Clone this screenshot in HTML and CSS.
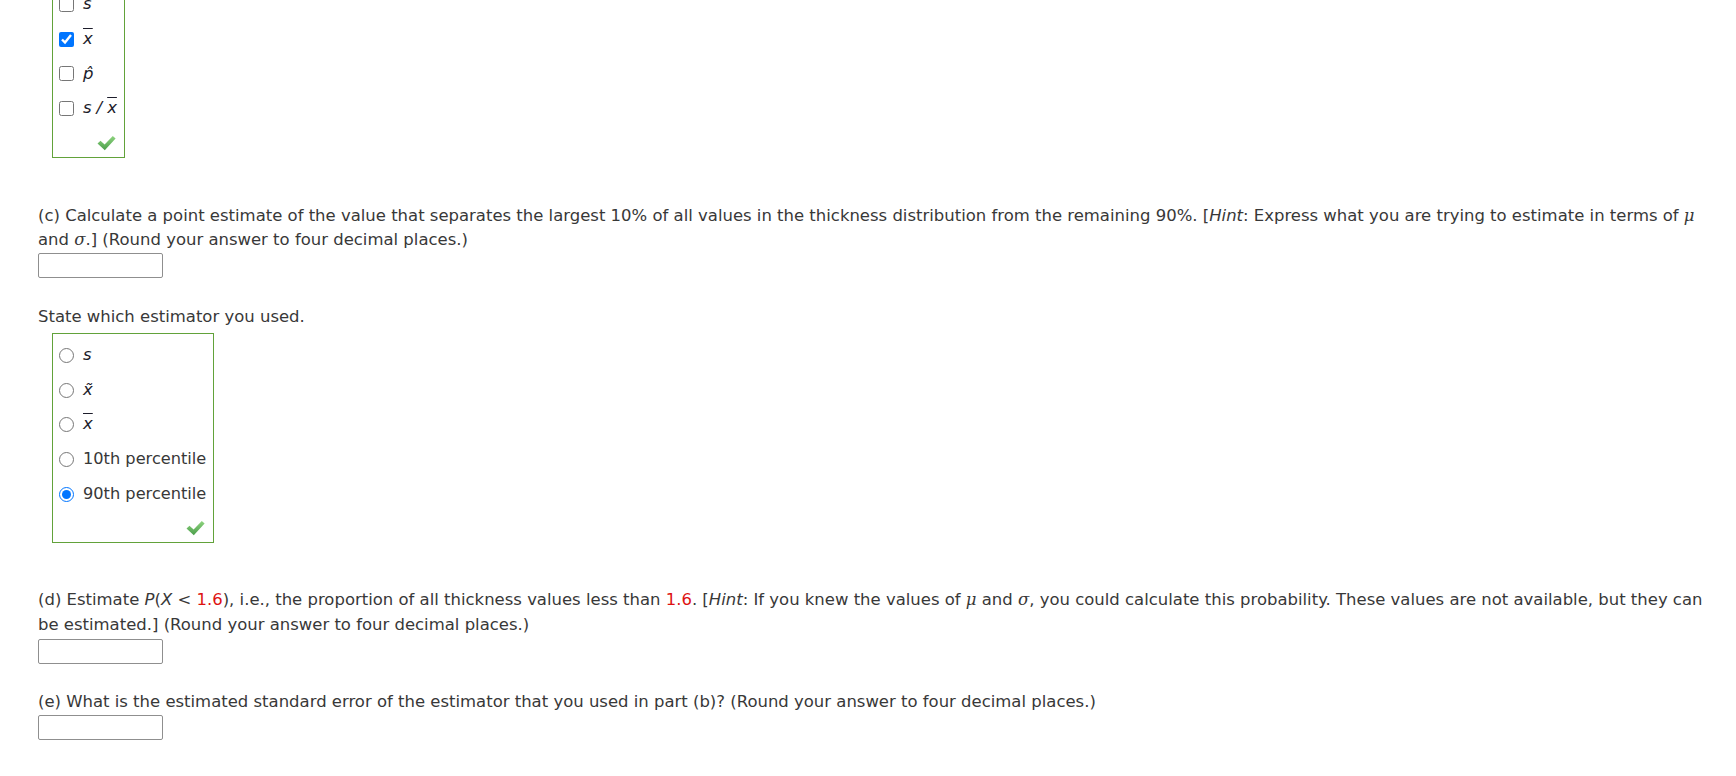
FILE: index.html
```html
<!DOCTYPE html>
<html lang="en">
<head>
<meta charset="utf-8">
<title>Point estimates</title>
<link rel="stylesheet" href="styles.css">
</head>
<body>
<div class="page">
  <div class="choice-box box-top">
    <label class="choice"><input type="checkbox"><span class="math">s</span></label>
    <label class="choice"><input type="checkbox" checked><span class="math"><span class="bar">x</span></span></label>
    <label class="choice"><input type="checkbox"><span class="math">p&#770;</span></label>
    <label class="choice"><input type="checkbox"><span class="math">s<span class="slash">/</span><span class="bar">x</span></span></label>
    <div class="mark">
      <svg width="19" height="16" viewBox="0 0 19 16"><defs><linearGradient id="g1" x1="0" y1="0" x2="0" y2="1"><stop offset="0" stop-color="#8fd47f"/><stop offset="1" stop-color="#4b9e4b"/></linearGradient></defs><path d="M0.5 8.5 L3.5 5.8 L7.6 9.6 L15.8 1 L18.6 3.6 L7.8 15.2 Z" fill="url(#g1)"/></svg>
    </div>
  </div>

  <section class="part part-c">
    <p class="prompt">(c) Calculate a point estimate of the value that separates the largest 10% of all values in the thickness distribution from the remaining 90%. [<i>Hint</i>: Express what you are trying to estimate in terms of <i class="greek">&mu;</i> and <i class="greek">&sigma;</i>.] (Round your answer to four decimal places.)</p>
    <input class="num-input" type="text">
    <p class="prompt sub">State which estimator you used.</p>
    <div class="choice-box">
      <label class="choice"><input type="radio" name="est"><span class="math">s</span></label>
      <label class="choice"><input type="radio" name="est"><span class="math">x&#771;</span></label>
      <label class="choice"><input type="radio" name="est"><span class="math"><span class="bar">x</span></span></label>
      <label class="choice"><input type="radio" name="est"><span>10th percentile</span></label>
      <label class="choice"><input type="radio" name="est" checked><span>90th percentile</span></label>
      <div class="mark">
        <svg width="19" height="16" viewBox="0 0 19 16"><defs><linearGradient id="g2" x1="0" y1="0" x2="0" y2="1"><stop offset="0" stop-color="#8fd47f"/><stop offset="1" stop-color="#4b9e4b"/></linearGradient></defs><path d="M0.5 8.5 L3.5 5.8 L7.6 9.6 L15.8 1 L18.6 3.6 L7.8 15.2 Z" fill="url(#g2)"/></svg>
      </div>
    </div>
  </section>

  <section class="part part-d">
    <p class="prompt">(d) Estimate <i>P</i>(<i>X</i> &lt; <span class="red">1.6</span>), i.e., the proportion of all thickness values less than <span class="red">1.6</span>. [<i>Hint</i>: If you knew the values of <i class="greek">&mu;</i> and <i class="greek">&sigma;</i>, you could calculate this probability. These values are not available, but they can be estimated.] (Round your answer to four decimal places.)</p>
    <input class="num-input" type="text">
  </section>

  <section class="part part-e">
    <p class="prompt">(e) What is the estimated standard error of the estimator that you used in part (b)? (Round your answer to four decimal places.)</p>
    <input class="num-input" type="text">
  </section>
</div>
</body>
</html>
```

FILE: styles.css
```css
html, body {
  margin: 0;
  padding: 0;
  background: #ffffff;
}

body {
  font-family: "DejaVu Sans", Verdana, sans-serif;
  font-size: 16.48px;
  line-height: 24.4px;
  color: #383838;
  overflow: hidden;
}

.page {
  padding: 0 24px 0 38px;
}

.prompt {
  margin: 0;
}

.part-c {
  margin-top: 46px;
}

.part-d {
  margin-top: 45px;
}

.part-e {
  margin-top: 26px;
}

.sub {
  margin-top: 27px;
  margin-bottom: 4px;
}

.part-d .num-input {
  margin-top: 2px;
}

.num-input {
  display: block;
  box-sizing: border-box;
  width: 125px;
  height: 25px;
  margin: 0;
  padding: 2px 4px;
  border: 1px solid #8f8f8f;
  border-radius: 2px;
  background: #ffffff;
  font: inherit;
}

.choice-box {
  display: flex;
  flex-direction: column;
  width: fit-content;
  margin-left: 14px;
  padding: 4px 7px 6px 5px;
  border: 1px solid #62a23a;
}

.box-top {
  margin-top: -18px;
}

.choice {
  display: flex;
  align-items: center;
  gap: 9px;
  height: 34.7px;
  font-size: 16.2px;
  color: #383838;
}

.choice input {
  width: 15px;
  height: 15px;
  margin: 0 0 0 1px;
  flex: none;
}

.math {
  font-style: italic;
  color: #1d1d2b;
  font-size: 16.48px;
}

.slash {
  margin: 0 5px;
}

.bar {
  text-decoration: overline;
}

.greek {
  font-family: "DejaVu Serif", serif;
  font-style: italic;
}

.red {
  color: #dd1111;
}

.mark {
  display: flex;
  justify-content: flex-end;
  padding: 9px 1px 0 0;
  height: 16px;
}

.mark svg {
  display: block;
}
```
